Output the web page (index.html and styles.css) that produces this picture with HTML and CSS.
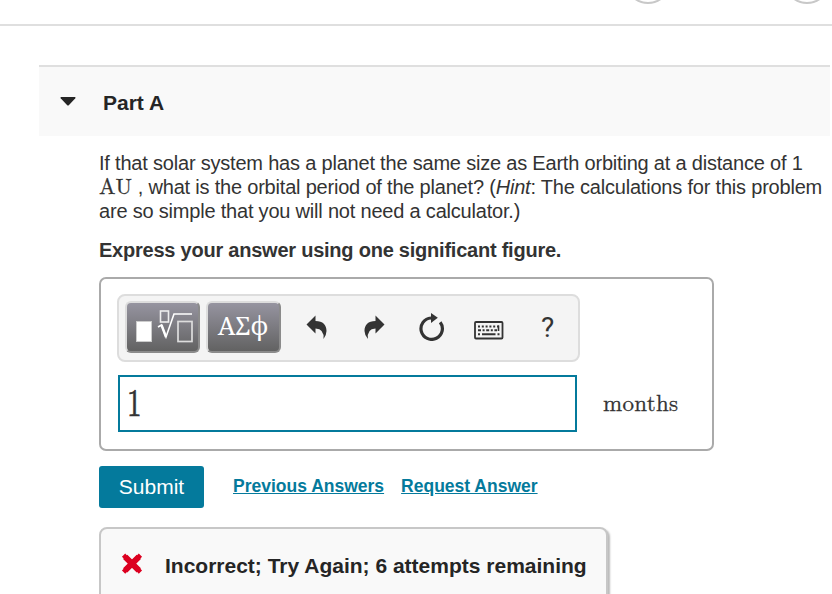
FILE: index.html
```html
<!DOCTYPE html>
<html lang="en">
<head>
    <meta charset="UTF-8">
    <meta name="viewport" content="width=device-width, initial-scale=1.0">
    <title>Part A</title>
    <link rel="stylesheet" href="styles.css">
</head>
<body>
    <div class="top-bar">
        <span class="nav-circle"></span>
        <span class="nav-circle"></span>
    </div>

    <section class="part">
        <div class="part-header">
            <svg class="caret" width="16" height="9" viewBox="0 0 16 9"><path d="M1 0H15Q16 .4 15.3 1.2L9 8Q8 9 7 8L.7 1.2Q0 .4 1 0Z" fill="#252525"/></svg>
            <h2>Part A</h2>
        </div>

        <div class="part-body">
            <p class="question">
                <span class="line">If that solar system has a planet the same size as Earth orbiting at a distance of 1</span>
                <span class="line"><span class="unit">AU</span> , what is the orbital period of the planet? (<em>Hint</em>: The calculations for this problem</span>
                <span class="line">are so simple that you will not need a calculator.)</span>
            </p>
            <p class="instruction">Express your answer using one significant figure.</p>

            <div class="answer-box">
                <div class="toolbar">
                    <button type="button" class="tool-dark" aria-label="Templates">
                        <svg width="70" height="47" viewBox="0 0 70 47" fill="none">
                            <rect x="9.5" y="17.5" width="15" height="20" fill="#fff" stroke="#ccc"/>
                            <rect x="33.5" y="7" width="8" height="11" stroke="#eee" stroke-width="1.6"/>
                            <path d="M31 23L34.5 21L39 33L47 10H65" stroke="#fff" stroke-width="1.6"/>
                            <path d="M34.5 21L39 33" stroke="#fff" stroke-width="2.4"/>
                            <rect x="51" y="17.5" width="14" height="20" stroke="#ddd" stroke-width="1.7"/>
                        </svg>
                    </button>
                    <button type="button" class="tool-dark greek">ΑΣϕ</button>
                    <button type="button" class="tool undo" aria-label="Undo">
                        <svg width="22" height="24" viewBox="0 0 22 24"><path d="M.5 9.5L9.5 .5V6C17 6 20.5 10 20.5 16Q20.5 20 17.5 24Q18.5 14 9.5 13.5V18.5Z" fill="#333"/></svg>
                    </button>
                    <button type="button" class="tool redo" aria-label="Redo">
                        <svg width="22" height="24" viewBox="0 0 22 24"><path d="M20.5 9.5L11.5 .5V6C4 6 .5 10 .5 16Q.5 20 4 24Q2.5 14 11.5 13.5V18.5Z" fill="#333"/></svg>
                    </button>
                    <button type="button" class="tool reset" aria-label="Reset">
                        <svg width="26" height="28" viewBox="0 0 26 28"><path d="M12 5A10.7 10.7 0 1 0 21.2 9.2" fill="none" stroke="#333" stroke-width="3.2"/><path d="M12 0L18.8 4.8L12 10Z" fill="#333"/></svg>
                    </button>
                    <button type="button" class="tool keyboard" aria-label="Keyboard">
                        <svg width="30" height="19" viewBox="0 0 30 19" fill="none" stroke="#333">
                            <rect x="1" y="1" width="27.5" height="16.5" rx="1" stroke-width="1.8"/>
                            <path d="M4 5.5H25" stroke-width="2" stroke-dasharray="2 1.8"/>
                            <path d="M4 9.3H23" stroke-width="2" stroke-dasharray="3 1.6 2 1.6"/>
                            <path d="M24.5 4.5V10" stroke-width="1.6"/>
                            <path d="M4 13.3H6M8 13.3H21.5M23.5 13.3H25.5" stroke-width="2"/>
                        </svg>
                    </button>
                    <button type="button" class="tool help">?</button>
                </div>
                <div class="answer-row">
                    <div class="answer-field"><span class="digit">1</span></div>
                    <span class="answer-unit">months</span>
                </div>
            </div>

            <div class="actions">
                <button type="button" class="submit">Submit</button>
                <a class="previous" href="#">Previous Answers</a>
                <a class="request" href="#">Request Answer</a>
            </div>

            <div class="feedback">
                <svg width="22" height="22" viewBox="0 0 22 22"><path d="M4.2 3.8L17.8 17.4M17.8 3.8L4.2 17.4" stroke="#dc0020" stroke-width="6"/><path d="M4.2 3.8L17.8 17.4M17.8 3.8L4.2 17.4" stroke="#dc0020" stroke-width="4.6" stroke-linecap="square"/></svg>
                <span>Incorrect; Try Again; 6 attempts remaining</span>
            </div>
        </div>
    </section>
</body>
</html>
```

FILE: styles.css
```css
* {
    box-sizing: border-box;
}

body {
    height: 594px;
    margin: 0;
    overflow: hidden;
    background-color: #ffffff;
    font-family: "Liberation Sans", Arial, sans-serif;
    color: #333333;
}

button {
    padding: 0;
    border: none;
    background: none;
    font-family: inherit;
}

svg {
    display: block;
    flex: none;
}

/* top navigation */
.top-bar {
    display: flex;
    align-items: flex-end;
    gap: 113px;
    height: 26px;
    padding: 0 0 20px 625px;
    border-bottom: 2px solid #dfdfdf;
    overflow: hidden;
}

.nav-circle {
    flex: none;
    width: 46px;
    height: 46px;
    border: 2px solid #c8c8c8;
    border-radius: 50%;
}

/* part */
.part {
    margin: 39px 2px 0 39px;
}

.part-header {
    display: flex;
    align-items: center;
    gap: 27px;
    height: 71px;
    padding-left: 21px;
    border-top: 2px solid #dfdfdf;
    background-color: #f9f9f9;
}

.part-header h2 {
    margin: 2px 0 0;
    font-size: 21px;
    color: #252525;
}

.part-body {
    padding: 15px 0 0 60px;
}

.question {
    margin: 0;
    font-size: 20px;
    line-height: 24px;
    letter-spacing: -0.2px;
}

.line {
    display: block;
    height: 24px;
    white-space: nowrap;
}

.unit,
.answer-unit {
    font-family: "Latin Modern Roman", "Liberation Serif", serif;
    -webkit-text-stroke: 0.3px #333333;
}

.unit {
    font-size: 22px;
    line-height: 20px;
    letter-spacing: 0.5px;
}

.instruction {
    margin: 15px 0 15px;
    font-size: 20px;
    font-weight: bold;
    line-height: 24px;
    letter-spacing: -0.23px;
}

.answer-box {
    width: 615px;
    height: 174px;
    padding: 15px 16px;
    border: 2px solid #aaaaaa;
    border-radius: 7px;
}

.toolbar {
    display: flex;
    align-items: center;
    width: 463px;
    height: 68px;
    padding: 0 0 2px 6px;
    border: 2px solid #dddddd;
    border-radius: 8px;
    background-color: #f4f4f4;
}

.tool-dark {
    width: 75px;
    height: 52px;
    margin-right: 6px;
    border: 2px solid #dddddd;
    border-right-color: #8b8b8b;
    border-bottom-color: #8b8b8b;
    border-radius: 6px;
    background: linear-gradient(#9694a0, #626262);
    color: #ffffff;
}

.greek {
    padding: 0 1px 4px 0;
    font-family: "Noto Serif", "DejaVu Serif", serif;
    font-size: 25px;
}

.undo {
    margin-left: 19px;
}

.redo {
    margin-left: 36px;
}

.reset {
    margin-left: 33px;
}

.keyboard {
    margin: 6px 0 0 29px;
}

.help {
    margin-left: 37px;
    font-family: Roboto, sans-serif;
    font-size: 28px;
    color: #333333;
}

.answer-row {
    display: flex;
    align-items: center;
    gap: 26px;
    margin: 13px 0 0 1px;
}

.answer-field {
    width: 459px;
    height: 57px;
    padding-left: 7px;
    border: 2px solid #047a9c;
}

.digit {
    display: inline-block;
    transform: scaleX(0.75);
    transform-origin: left;
    font-family: "Latin Modern Roman", "Liberation Serif", serif;
    font-size: 39px;
    line-height: 46px;
    -webkit-text-stroke: 0.7px #333333;
}

.answer-unit {
    padding-bottom: 5px;
    font-size: 23px;
    letter-spacing: 0.3px;
}

/* buttons under the answer */
.actions {
    display: flex;
    align-items: center;
    margin-top: 15px;
}

.submit {
    width: 105px;
    height: 42px;
    border-radius: 3px;
    background-color: #047a9c;
    color: #ffffff;
    font-size: 21px;
}

.actions a {
    padding-bottom: 2px;
    font-size: 17.5px;
    font-weight: bold;
    color: #047a9c;
}

.previous {
    margin-left: 29px;
}

.request {
    margin-left: 17px;
}

.feedback {
    display: flex;
    align-items: center;
    gap: 22px;
    width: 509px;
    height: 78px;
    margin-top: 19px;
    padding-left: 20px;
    border: 2px solid #c7c7c7;
    border-radius: 8px;
    background-color: #f9f9f9;
    box-shadow: 2px 2px 2px #bbbbbb;
    font-size: 21px;
    font-weight: bold;
    white-space: nowrap;
    color: #252525;
}

.feedback svg {
    margin-bottom: 4px;
}
```
